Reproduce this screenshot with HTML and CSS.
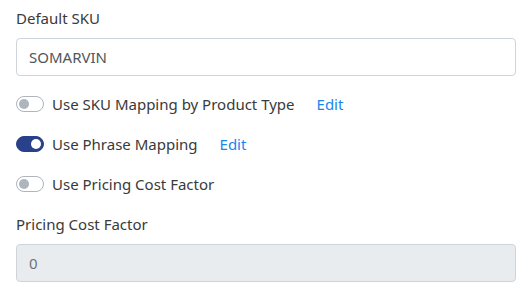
FILE: index.html
```html
<!DOCTYPE html>
<html lang="en">

<head>
    <meta charset="UTF-8">
    <title>SKU Settings</title>
    <link rel="stylesheet" href="styles.css">
</head>

<body>
    <div class="settings">
        <div class="field">
            <label class="field-label">Default SKU</label>
            <input class="field-input" type="text" value="SOMARVIN">
        </div>

        <div class="switch-row">
            <span class="switch"></span>
            <span class="switch-label">Use SKU Mapping by Product Type</span>
            <a class="edit-link" href="#">Edit</a>
        </div>

        <div class="switch-row">
            <span class="switch on"></span>
            <span class="switch-label">Use Phrase Mapping</span>
            <a class="edit-link" href="#">Edit</a>
        </div>

        <div class="switch-row">
            <span class="switch"></span>
            <span class="switch-label">Use Pricing Cost Factor</span>
        </div>

        <div class="field">
            <label class="field-label">Pricing Cost Factor</label>
            <input class="field-input" type="text" value="0" disabled>
        </div>
    </div>
</body>

</html>
```

FILE: styles.css
```css
html,
body {
    margin: 0;
    background: #fff;
}

body {
    font-family: "Noto Sans", "Open Sans", sans-serif;
    font-size: 15px;
    color: #3a3a3a;
}

.settings {
    width: 500px;
    padding: 8px 15px 0 16px;
    display: flex;
    flex-direction: column;
}

.field {
    display: flex;
    flex-direction: column;
}

.field-label {
    line-height: 20px;
    margin-bottom: 10px;
}

.field-input {
    box-sizing: border-box;
    width: 100%;
    height: 38px;
    padding: 0 12px;
    font: inherit;
    color: #50565c;
    background: #fff;
    border: 1px solid #ced4da;
    border-radius: 4px;
    outline: none;
}

.field-input:disabled {
    background: #e9ecef;
    color: #6c757d;
}

.switch-row {
    display: flex;
    align-items: center;
    height: 40px;
}

.settings > .field:first-child {
    margin-bottom: 8px;
}

.settings > .switch-row:nth-child(4) {
    margin-bottom: 10px;
}

.switch {
    position: relative;
    box-sizing: border-box;
    width: 28px;
    height: 16px;
    border: 1px solid #adb5bd;
    border-radius: 8px;
    background: #fff;
    margin-right: 8px;
}

.switch::after {
    content: "";
    position: absolute;
    top: 2px;
    left: 2px;
    width: 10px;
    height: 10px;
    border-radius: 50%;
    background: #adb5bd;
}

.switch.on {
    background: #29408a;
    border-color: #29408a;
}

.switch.on::after {
    left: 14px;
    background: #fff;
}

.edit-link {
    margin-left: 22px;
    color: #1a85f0;
    text-decoration: none;
}
```
